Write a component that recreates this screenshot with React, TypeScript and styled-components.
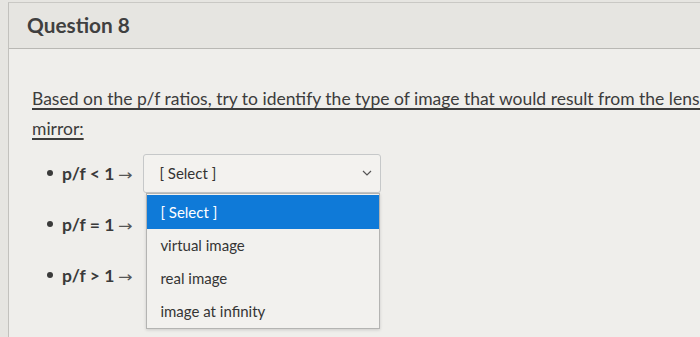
import { FC } from "react";
import styled, { createGlobalStyle } from "styled-components";

const GlobalStyle = createGlobalStyle`
  html, body {
    margin: 0;
    padding: 0;
    background: #e6e5e1;
    font-family: Lato, "Open Sans", sans-serif;
    color: #353535;
  }
`;

const Page = styled.div`
  display: flex;
  height: 337px;
  padding: 2px 0 0 8px;
  box-sizing: border-box;
  overflow: hidden;
`;

const Card = styled.div`
  flex: 1;
  display: flex;
  flex-direction: column;
  border-left: 1px solid #c2c1bd;
  border-top: 1px solid #c9c8c4;
  background: #efeeeb;
  min-width: 0;
`;

const Header = styled.div`
  height: 46px;
  display: flex;
  align-items: center;
  padding: 0 0 3px 18px;
  box-sizing: border-box;
  background: #e6e5e1;
  border-bottom: 1px solid #b9b8b4;
`;

const Heading = styled.h2`
  margin: 0;
  font-size: 20.8px;
  font-weight: 700;
  color: #404040;
`;

const Body = styled.div`
  padding: 35px 0 0 23px;
`;

const Prompt = styled.p`
  margin: 0;
  font-size: 17.5px;
  line-height: 30px;
  white-space: nowrap;
  color: #3c3c3c;
  span {
    text-decoration: underline;
    text-decoration-thickness: 1.5px;
    text-underline-offset: 3px;
  }
`;

const List = styled.ul`
  list-style: none;
  margin: 10px 0 0;
  padding: 0 0 0 15px;
  display: flex;
  flex-direction: column;
  gap: 13px;
`;

const Item = styled.li`
  display: flex;
  align-items: center;
  height: 38px;
`;

const Dot = styled.span`
  width: 6px;
  height: 6px;
  border-radius: 50%;
  background: #3a3a3a;
  margin-right: 9px;
`;

const Label = styled.span`
  font-size: 17.5px;
  font-weight: 700;
  color: #3a3a3a;
  white-space: nowrap;
  margin-right: 4px;
`;

const Arrow = styled.span`
  font-family: "DejaVu Sans", sans-serif;
  font-size: 15px;
  color: #555;
  width: 25px;
  transform: scaleX(1.15) translateY(2px);
  transform-origin: left center;
`;

const SelectWrap = styled.div`
  position: relative;
`;

const SelectBox = styled.div`
  width: 238px;
  height: 39px;
  box-sizing: border-box;
  border: 1px solid #c6c8c9;
  border-radius: 3px;
  background: #f3f2ef;
  display: flex;
  align-items: center;
  justify-content: space-between;
  padding: 0 8px 0 15px;
  font-size: 15px;
  color: #333;
`;

const Menu = styled.div`
  position: absolute;
  left: 3px;
  top: 100%;
  width: 234px;
  box-sizing: border-box;
  padding-top: 1px;
  border: 1px solid #b4b4b2;
  background: #f2f1ee;
  box-shadow: 0 1px 3px rgba(0, 0, 0, 0.15);
`;

const Option = styled.div<{ $active?: boolean }>`
  height: ${(p) => (p.$active ? 34 : 33)}px;
  display: flex;
  align-items: center;
  padding-left: 13px;
  font-size: 15px;
  background: ${(p) => (p.$active ? "#0f7ad8" : "transparent")};
  color: ${(p) => (p.$active ? "#fff" : "#353535")};
`;

const rows = ["p/f < 1", "p/f = 1", "p/f > 1"];
const options = ["virtual image", "real image", "image at infinity"];

const App: FC = () => {
  return (
    <Page>
      <GlobalStyle />
      <Card>
        <Header>
          <Heading>Question 8</Heading>
        </Header>
        <Body>
          <Prompt>
            <span>
              Based on the p/f ratios, try to identify the type of image that
              would result from the lens or
            </span>
            <br />
            <span>mirror:</span>
          </Prompt>
          <List>
            {rows.map((r, idx) => (
              <Item key={r}>
                <Dot />
                <Label>{r}</Label>
                <Arrow>→</Arrow>
                {idx === 0 && (
                  <SelectWrap>
                    <SelectBox>
                      [ Select ]
                      <svg width="10" height="6" viewBox="0 0 10 6">
                        <path
                          d="M1 1 L5 5 L9 1"
                          fill="none"
                          stroke="#555"
                          strokeWidth="1.2"
                        />
                      </svg>
                    </SelectBox>
                    <Menu>
                      <Option $active>[ Select ]</Option>
                      {options.map((o) => (
                        <Option key={o}>{o}</Option>
                      ))}
                    </Menu>
                  </SelectWrap>
                )}
              </Item>
            ))}
          </List>
        </Body>
      </Card>
    </Page>
  );
};

export default App;
